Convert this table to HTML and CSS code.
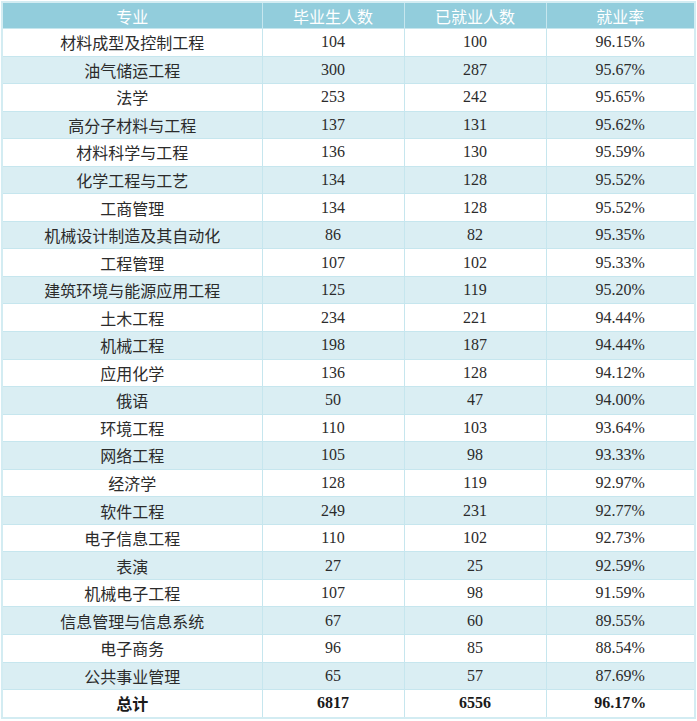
FILE: index.html
```html
<!DOCTYPE html>
<html lang="zh">
<head>
<meta charset="utf-8">
<link rel="stylesheet" href="styles.css">
</head>
<body>
<table class="stats">
<colgroup><col class="c1"><col class="c2"><col class="c3"><col class="c4"></colgroup>
<thead>
<tr><th>专业</th><th>毕业生人数</th><th>已就业人数</th><th>就业率</th></tr>
</thead>
<tbody>
<tr><td class="name">材料成型及控制工程</td><td>104</td><td>100</td><td>96.15%</td></tr>
<tr><td class="name">油气储运工程</td><td>300</td><td>287</td><td>95.67%</td></tr>
<tr><td class="name">法学</td><td>253</td><td>242</td><td>95.65%</td></tr>
<tr><td class="name">高分子材料与工程</td><td>137</td><td>131</td><td>95.62%</td></tr>
<tr><td class="name">材料科学与工程</td><td>136</td><td>130</td><td>95.59%</td></tr>
<tr><td class="name">化学工程与工艺</td><td>134</td><td>128</td><td>95.52%</td></tr>
<tr><td class="name">工商管理</td><td>134</td><td>128</td><td>95.52%</td></tr>
<tr><td class="name">机械设计制造及其自动化</td><td>86</td><td>82</td><td>95.35%</td></tr>
<tr><td class="name">工程管理</td><td>107</td><td>102</td><td>95.33%</td></tr>
<tr><td class="name">建筑环境与能源应用工程</td><td>125</td><td>119</td><td>95.20%</td></tr>
<tr><td class="name">土木工程</td><td>234</td><td>221</td><td>94.44%</td></tr>
<tr><td class="name">机械工程</td><td>198</td><td>187</td><td>94.44%</td></tr>
<tr><td class="name">应用化学</td><td>136</td><td>128</td><td>94.12%</td></tr>
<tr><td class="name">俄语</td><td>50</td><td>47</td><td>94.00%</td></tr>
<tr><td class="name">环境工程</td><td>110</td><td>103</td><td>93.64%</td></tr>
<tr><td class="name">网络工程</td><td>105</td><td>98</td><td>93.33%</td></tr>
<tr><td class="name">经济学</td><td>128</td><td>119</td><td>92.97%</td></tr>
<tr><td class="name">软件工程</td><td>249</td><td>231</td><td>92.77%</td></tr>
<tr><td class="name">电子信息工程</td><td>110</td><td>102</td><td>92.73%</td></tr>
<tr><td class="name">表演</td><td>27</td><td>25</td><td>92.59%</td></tr>
<tr><td class="name">机械电子工程</td><td>107</td><td>98</td><td>91.59%</td></tr>
<tr><td class="name">信息管理与信息系统</td><td>67</td><td>60</td><td>89.55%</td></tr>
<tr><td class="name">电子商务</td><td>96</td><td>85</td><td>88.54%</td></tr>
<tr><td class="name">公共事业管理</td><td>65</td><td>57</td><td>87.69%</td></tr>
<tr class="total"><td class="name">总计</td><td>6817</td><td>6556</td><td>96.17%</td></tr>
</tbody>
</table>
</body>
</html>
```
FILE: styles.css
```css
html, body {
  margin: 0;
  padding: 0;
  background: #ffffff;
}
body {
  padding: 1px 0 0 1px;
}
.stats {
  border-collapse: collapse;
  table-layout: fixed;
  width: 693px;
  font-family: "Liberation Serif", "Noto Sans CJK SC", serif;
  font-size: 16px;
  color: #2b2b2b;
  border: 2px solid #d3ecf2;
}
.c1 { width: 260px; }
.c2 { width: 142px; }
.c3 { width: 142px; }
.c4 { width: 149px; }
.stats th {
  background: #92cddc;
  color: #ffffff;
  font-family: "Noto Sans CJK SC", sans-serif;
  font-size: 16px;
  font-weight: normal;
  height: 25px;
  padding: 0;
  border: 1px solid #c6e6ee;
  text-align: center;
  vertical-align: middle;
}
.stats td {
  height: 26.55px;
  padding: 0;
  border: 1px solid #c6e6ee;
  text-align: center;
  vertical-align: middle;
}
.stats td.name {
  font-family: "Noto Sans CJK SC", sans-serif;
  font-size: 16px;
}
.stats tbody tr:nth-child(even) td {
  background: #daeef3;
}
.stats .total td {
  font-weight: bold;
  color: #1a1a1a;
}
```
